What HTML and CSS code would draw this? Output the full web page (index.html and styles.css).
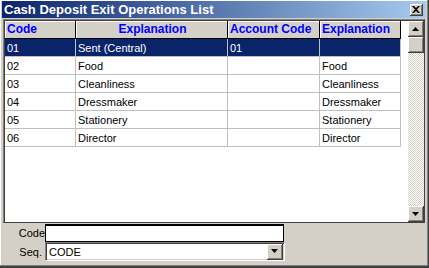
FILE: index.html
```html
<!DOCTYPE html>
<html lang="en">
<head>
    <meta charset="UTF-8">
    <title>Cash Deposit Exit Operations List</title>
    <link rel="stylesheet" href="styles.css">
</head>
<body>
    <div class="window">
        <div class="titlebar">
            <span class="title">Cash Deposit Exit Operations List</span>
            <span class="close-btn">
                <svg width="8" height="7" viewBox="0 0 8 7"><path d="M0 0h2l2 2 2-2h2L5 3.5 8 7H6L4 5 2 7H0l3-3.5z" fill="#000"/></svg>
            </span>
        </div>

        <div class="grid-frame">
            <div class="grid">
                <div class="grid-row head">
                    <div class="cell">Code</div>
                    <div class="cell center">Explanation</div>
                    <div class="cell">Account Code</div>
                    <div class="cell">Explanation</div>
                </div>
                <div class="grid-row selected">
                    <div class="cell">01</div>
                    <div class="cell">Sent (Central)</div>
                    <div class="cell">01</div>
                    <div class="cell"></div>
                </div>
                <div class="grid-row">
                    <div class="cell">02</div>
                    <div class="cell">Food</div>
                    <div class="cell"></div>
                    <div class="cell">Food</div>
                </div>
                <div class="grid-row">
                    <div class="cell">03</div>
                    <div class="cell">Cleanliness</div>
                    <div class="cell"></div>
                    <div class="cell">Cleanliness</div>
                </div>
                <div class="grid-row">
                    <div class="cell">04</div>
                    <div class="cell">Dressmaker</div>
                    <div class="cell"></div>
                    <div class="cell">Dressmaker</div>
                </div>
                <div class="grid-row">
                    <div class="cell">05</div>
                    <div class="cell">Stationery</div>
                    <div class="cell"></div>
                    <div class="cell">Stationery</div>
                </div>
                <div class="grid-row">
                    <div class="cell">06</div>
                    <div class="cell">Director</div>
                    <div class="cell"></div>
                    <div class="cell">Director</div>
                </div>
            </div>

            <div class="vscroll">
                <span class="sb-btn">
                    <svg width="7" height="4" viewBox="0 0 7 4"><path d="M3.5 0L7 4H0z" fill="#000"/></svg>
                </span>
                <span class="sb-thumb"></span>
                <span class="sb-track"></span>
                <span class="sb-btn">
                    <svg width="7" height="4" viewBox="0 0 7 4"><path d="M0 0h7L3.5 4z" fill="#000"/></svg>
                </span>
            </div>
        </div>

        <div class="filters">
            <div class="field">
                <label class="field-label">Code</label>
                <div class="text-input"></div>
            </div>
            <div class="field">
                <label class="field-label seq">Seq.</label>
                <div class="combo">
                    <span class="combo-value">CODE</span>
                    <span class="combo-btn">
                        <svg width="7" height="4" viewBox="0 0 7 4"><path d="M0 0h7L3.5 4z" fill="#000"/></svg>
                    </span>
                </div>
            </div>
        </div>
    </div>
</body>
</html>
```

FILE: styles.css
```css
* {
    box-sizing: border-box;
    margin: 0;
    padding: 0;
}

body {
    width: 429px;
    height: 268px;
    overflow: hidden;
    background-color: #d4d0c8;
    font-family: "Liberation Sans", Arial, sans-serif;
    font-size: 11px;
}

.window {
    width: 429px;
    height: 268px;
    display: flex;
    flex-direction: column;
    padding: 1px 2px 0 2px;
    border-right: 1px solid #404040;
    border-bottom: 2px solid #404040;
    box-shadow: inset -1px -1px 0 #808080, inset 1px 1px 0 #fff;
}

.titlebar {
    height: 17px;
    display: flex;
    align-items: center;
    justify-content: space-between;
    padding: 0 3px 0 2px;
    background: linear-gradient(to right, #0a246a, #a6caf0);
}

.title {
    color: white;
    font-weight: bold;
    font-size: 13px;
}

.close-btn {
    width: 13px;
    height: 12px;
    display: flex;
    align-items: center;
    justify-content: center;
    background-color: #d4d0c8;
    border-right: 1px solid #404040;
    border-bottom: 1px solid #404040;
    box-shadow: inset 1px 1px 0 #fff, inset -1px -1px 0 #808080;
}

/* data grid */
.grid-frame {
    height: 204px;
    margin: 1px 1px 0 1px;
    display: flex;
    background-color: white;
    border: 1px solid #808080;
    border-right-color: #404040;
    border-bottom-color: #404040;
    box-shadow: inset 1px 1px 0 #404040;
    padding: 1px 0 0 1px;
}

.grid {
    flex: 1;
    padding-right: 6px;
}

.grid-row {
    display: grid;
    grid-template-columns: 71px 152px 92px 81px;
    height: 18px;
}

.cell {
    height: 18px;
    line-height: 18px;
    padding-left: 2px;
    white-space: nowrap;
    overflow: hidden;
    border-right: 1px solid #c0c0c0;
    border-bottom: 1px solid #c0c0c0;
    color: #000;
}

.head .cell {
    background-color: #d4d0c8;
    color: #0000ff;
    font-weight: bold;
    font-size: 12px;
    line-height: 17px;
    border-right-color: #000;
    border-bottom-color: #000;
    box-shadow: inset 1px 1px 0 #fff;
}

.head .cell.center {
    text-align: center;
}

.selected .cell {
    background-color: #0a246a;
    color: white;
}

.vscroll {
    width: 16px;
    display: flex;
    flex-direction: column;
}

.sb-btn,
.sb-thumb {
    height: 16px;
    display: flex;
    align-items: center;
    justify-content: center;
    background-color: #d4d0c8;
    border-right: 1px solid #404040;
    border-bottom: 1px solid #404040;
    box-shadow: inset 1px 1px 0 #fff, inset -1px -1px 0 #808080;
}

.sb-track {
    flex: 1;
    background: repeating-conic-gradient(#d4d0c8 0 25%, #fff 0 50%) 0 0 / 2px 2px;
}

/* filter fields */
.filters {
    display: flex;
    flex-direction: column;
    padding-top: 1px;
}

.field {
    display: flex;
    align-items: center;
}

.field-label {
    width: 43px;
    text-align: right;
    font-size: 11px;
}

.field-label.seq {
    padding-right: 3px;
}

.text-input {
    width: 239px;
    height: 18px;
    background-color: white;
    border: 1px solid #000;
    border-top-width: 2px;
}

.combo {
    width: 240px;
    height: 19px;
    display: flex;
    align-items: center;
    justify-content: space-between;
    background-color: white;
    border-left: 1px solid #808080;
    border-top: 1px solid #808080;
    border-right: 1px solid #fff;
    border-bottom: 1px solid #fff;
    box-shadow: inset 1px 1px 0 #404040, inset -1px -1px 0 #d4d0c8;
    padding: 1px 1px 1px 3px;
}

.combo-btn {
    width: 16px;
    height: 16px;
    display: flex;
    align-items: center;
    justify-content: center;
    background-color: #d4d0c8;
    border-right: 1px solid #404040;
    border-bottom: 1px solid #404040;
    box-shadow: inset 1px 1px 0 #fff, inset -1px -1px 0 #808080;
}
```
